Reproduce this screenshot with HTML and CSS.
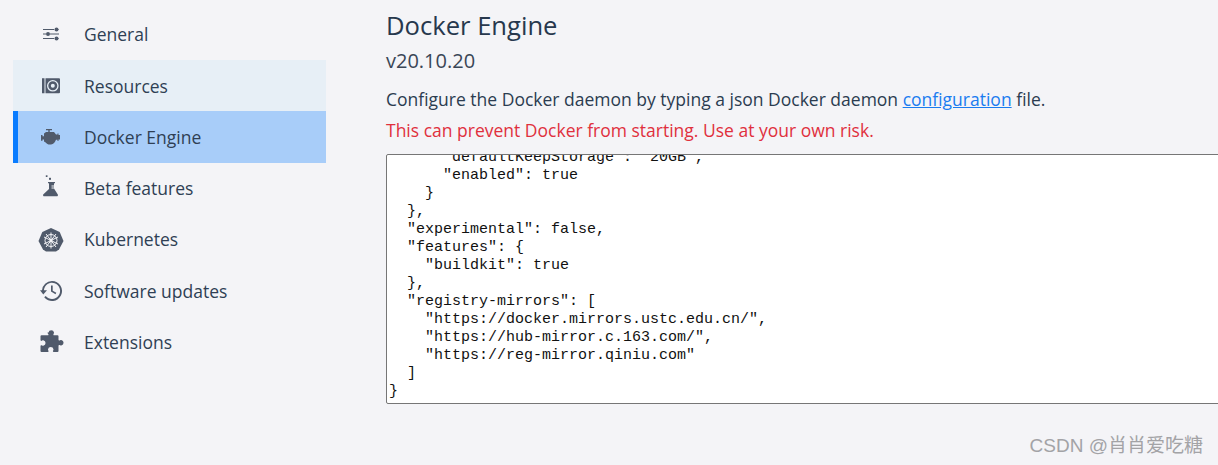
FILE: index.html
```html
<!DOCTYPE html>
<html lang="en">
<head>
<meta charset="utf-8">
<title>Docker Engine</title>
<link rel="stylesheet" href="styles.css">
</head>
<body>
<div class="page">
  <nav class="sidebar">
    <div class="item">
      <svg class="icon" viewBox="0 0 26 26"><path fill="none" stroke="currentColor" stroke-width="1.1" d="M5 8.500h11M20.500 8.500h.5M5 13h3M12 13h9M5 17.500h11M20.500 17.500h.5"/><circle cx="18.500" cy="8.500" r="2"/><circle cx="10" cy="13" r="2"/><circle cx="18.500" cy="17.500" r="2"/></svg>
      <span>General</span>
    </div>
    <div class="item hover">
      <svg class="icon" viewBox="0 0 26 26"><path fill-rule="evenodd" d="M4 5.300h2.500v15H4zM7.500 5.300H21a1 1 0 0 1 1 1v13a1 1 0 0 1-1 1H7.500zM14.800 7a5.800 5.800 0 1 0 0 11.600a5.800 5.800 0 0 0 0-11.600zM14.800 8.300a4.500 4.500 0 1 1 0 9a4.500 4.500 0 0 1 0-9zM14.800 10.800a2 2 0 1 0 0 4a2 2 0 0 0 0-4z"/></svg>
      <span>Resources</span>
    </div>
    <div class="item active">
      <svg class="icon" viewBox="0 0 26 26"><path d="M8 5h6v1.300h-2.300V8H16l2 2.500h1.500V9.500h1V11h1.500v4.500h-1.500V17h-1v-1.200H18c-1 2.500-2.500 4.700-5 4.700h-2.500C9 20.500 8 18 6 17.500V15.500H4.500v1.200H3V11h1.500v1.200H6V9.500L8 8h2.300V6.300H8z"/></svg>
      <span>Docker Engine</span>
    </div>
    <div class="item">
      <svg class="icon" viewBox="0 0 26 26"><path fill-rule="evenodd" d="M10 7h7v1.200h-1v2.300h-2.500v1H16v1h-2.500v1H16l3.800 6a1.200 1.200 0 0 1-1 1.800H6.200a1.200 1.200 0 0 1-1-1.800L11 14V8.200h-1z"/><rect x="7.800" y=".3" width="1.700" height="1.700"/><rect x="11" y="2.800" width="2" height="2"/></svg>
      <span>Beta features</span>
    </div>
    <div class="item">
      <svg class="icon" viewBox="0 0 26 26"><path d="M13 1l8.700 4 3.800 9-4.500 8.500-3 2H8l-3-2L.5 14l3.800-9z"/><g fill="none" stroke="#f4f4f7" stroke-width="1"><circle cx="13" cy="13.500" r="6"/><path d="M13 5.500v16M6 10l14 7M20 10L6 17M8 20l10-13M18 20L8 7"/></g><circle cx="13" cy="13.500" r="1.400" fill="#f4f4f7"/></svg>
      <span>Kubernetes</span>
    </div>
    <div class="item">
      <svg class="icon" viewBox="0 0 26 26"><path d="M14 3a10 10 0 1 1-7.800 16.200l1.500-1.200A8.100 8.100 0 1 0 5.900 12.300H9l-3.700 4.200L2 12.300h2A10 10 0 0 1 14 3z"/><path d="M13 7.500h1.700v5.200l3.600 2.100-.8 1.400L13 13.600z"/></svg>
      <span>Software updates</span>
    </div>
    <div class="item">
      <svg class="icon" viewBox="0 0 26 26"><path d="M10.500 3.500a2.800 2.800 0 0 1 5.500 0c0 1-.6 1.500-.6 2.200 0 .4.300.6.800.6H19.500a1 1 0 0 1 1 1v3.500c0 .5.300.8.700.8.700 0 1.100-.6 2.100-.6a2.800 2.800 0 0 1 0 5.500c-1 0-1.400-.6-2.100-.6-.4 0-.7.300-.7.800V22a1 1 0 0 1-1 1h-3.800c-.5 0-.8-.3-.8-.7 0-.7.600-1.100.6-2.100a2.800 2.800 0 0 0-5.500 0c0 1 .6 1.400.6 2.100 0 .4-.3.700-.8.700H3.500a1 1 0 0 1-1-1v-5c0-.5.300-.8.700-.8.700 0 1.100.6 2.100.6a2.800 2.800 0 0 0 0-5.500c-1 0-1.400.6-2.100.6-.4 0-.7-.300-.7-.8V7.300a1 1 0 0 1 1-1h6.200c.5 0 .8-.2.800-.6 0-.7-1-1.200-1-2.200z"/></svg>
      <span>Extensions</span>
    </div>
  </nav>
  <main class="content">
    <h1 class="title">Docker Engine</h1>
    <div class="version">v20.10.20</div>
    <p class="desc">Configure the Docker daemon by typing a json Docker daemon <a class="link" href="#">configuration</a> file.</p>
    <p class="warn">This can prevent Docker from starting. Use at your own risk.</p>
    <div class="editor"><pre class="code">      "defaultKeepStorage": "20GB",
      "enabled": true
    }
  },
  "experimental": false,
  "features": {
    "buildkit": true
  },
  "registry-mirrors": [
    "https://docker.mirrors.ustc.edu.cn/",
    "https://hub-mirror.c.163.com/",
    "https://reg-mirror.qiniu.com"
  ]
}</pre></div>
  </main>
</div>
<div class="watermark">CSDN @肖肖爱吃糖</div>
</body>
</html>
```
FILE: styles.css
```css
* { box-sizing: border-box; }
html, body { margin: 0; height: 100%; overflow: hidden; }
body {
  background: #f4f4f7;
  color: #2b3c50;
  font-family: "Open Sans", sans-serif;
  position: relative;
}
.page { display: flex; height: 465px; }
.sidebar {
  width: 313px;
  margin-left: 13px;
  padding-top: 8.700px;
  flex: none;
}
.item {
  height: 51.300px;
  display: flex;
  align-items: center;
  padding-left: 25px;
  font-size: 17.500px;
  line-height: 24.200px;
  color: #2f3f54;
}
.item.hover { background: #e7eff6; }
.item.active {
  background: #a8cdf9;
  border-left: 5px solid #0a7cff;
  padding-left: 20px;
}
.icon {
  width: 26px;
  height: 26px;
  margin-right: 20px;
  fill: #505a6b;
  color: #505a6b;
  flex: none;
}
.content {
  margin-left: 60px;
  flex: 1;
  min-width: 0;
}
.title {
  margin: 7px 0 0;
  font-size: 25.600px;
  line-height: 38px;
  font-weight: 400;
  color: #27384d;
}
.version {
  font-size: 20px;
  line-height: 26px;
  margin-top: 3px;
  color: #3a4656;
}
.desc, .warn {
  margin: 0;
  font-size: 17.500px;
  line-height: 24px;
}
.desc { margin-top: 13px; color: #2b3c50; }
.warn { margin-top: 7px; color: #e0303d; }
.link { color: #1a7cf0; }
.editor {
  margin-top: 12px;
  width: 840px;
  height: 250px;
  background: #fff;
  border: 1px solid #767676;
  border-radius: 2px 0 0 2px;
  overflow: hidden;
  display: flex;
  flex-direction: column;
  justify-content: flex-end;
  padding: 0 0 2px 2px;
}
.code {
  margin: 0;
  font-family: "Liberation Mono", monospace;
  font-size: 15px;
  line-height: 18px;
  color: #111;
}
.watermark {
  position: absolute;
  right: 15px;
  bottom: 8px;
  font-family: "Liberation Sans", "Noto Sans CJK SC", sans-serif;
  font-size: 19px;
  color: #a3a3a6;
}
```
